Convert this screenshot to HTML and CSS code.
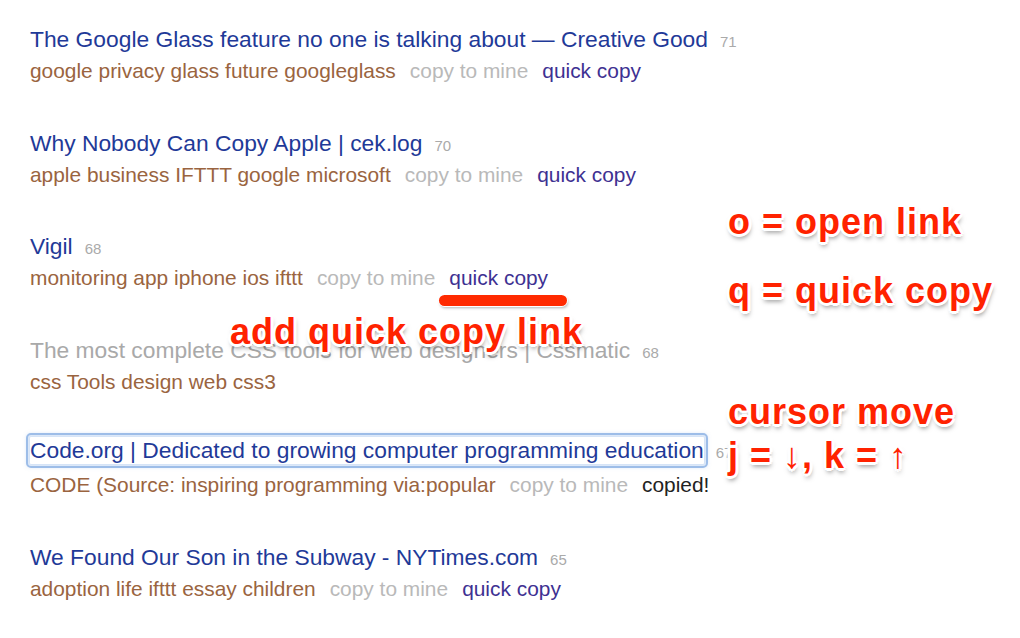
FILE: index.html
```html
<!DOCTYPE html>
<html>
<head>
<meta charset="utf-8">
<link rel="stylesheet" href="styles.css">
</head>
<body>
<div class="page">
  <ul class="list">
    <li class="entry">
      <div class="head"><a class="title">The Google Glass feature no one is talking about — Creative Good</a><span class="count">71</span></div>
      <div class="meta"><span class="tags">google privacy glass future googleglass</span><span class="copy">copy to mine</span><a class="quick">quick copy</a></div>
    </li>
    <li class="entry">
      <div class="head"><a class="title">Why Nobody Can Copy Apple | cek.log</a><span class="count">70</span></div>
      <div class="meta"><span class="tags">apple business IFTTT google microsoft</span><span class="copy">copy to mine</span><a class="quick">quick copy</a></div>
    </li>
    <li class="entry">
      <div class="head"><a class="title">Vigil</a><span class="count">68</span></div>
      <div class="meta"><span class="tags">monitoring app iphone ios ifttt</span><span class="copy">copy to mine</span><a class="quick">quick copy</a></div>
    </li>
    <li class="entry">
      <div class="head"><a class="title visited">The most complete CSS tools for web designers | Cssmatic</a><span class="count">68</span></div>
      <div class="meta"><span class="tags">css Tools design web css3</span></div>
    </li>
    <li class="entry">
      <div class="head"><a class="title focused">Code.org | Dedicated to growing computer programming education</a><span class="count">67</span></div>
      <div class="meta"><span class="tags">CODE (Source: inspiring programming via:popular</span><span class="copy">copy to mine</span><span class="copied">copied!</span></div>
    </li>
    <li class="entry">
      <div class="head"><a class="title">We Found Our Son in the Subway - NYTimes.com</a><span class="count">65</span></div>
      <div class="meta"><span class="tags">adoption life ifttt essay children</span><span class="copy">copy to mine</span><a class="quick">quick copy</a></div>
    </li>
  </ul>

  <div class="bar"></div>
  <div class="note note-add">add quick copy link</div>
  <div class="notes">
    <div class="note">o = open link</div>
    <div class="note n2">q = quick copy</div>
    <div class="note n3">cursor move</div>
    <div class="note n4">j = ↓, k = ↑</div>
  </div>
</div>
</body>
</html>
```
FILE: styles.css
```css
html, body {
  margin: 0;
  padding: 0;
  background: #fff;
}
body {
  font-family: "Liberation Sans", Arial, Helvetica, sans-serif;
}
.page {
  position: relative;
  width: 1020px;
  height: 638px;
  overflow: hidden;
}
.list {
  list-style: none;
  margin: 0;
  padding: 23px 0 0 30px;
  display: flex;
  flex-direction: column;
  gap: 39.6px;
}
.entry {
  display: flex;
  flex-direction: column;
}
.head {
  display: flex;
  align-items: baseline;
  gap: 12px;
  height: 32px;
  line-height: 32px;
}
.title {
  font-size: 22.8px;
  color: #1f3a98;
  text-decoration: none;
  white-space: nowrap;
}
.title.visited {
  color: #a9a9a9;
}
.title.focused {
  line-height: 27px;
  outline: 2px solid #9dbde8;
  outline-offset: 2px;
  box-shadow: 0 0 4px 3px rgba(120, 165, 225, 0.35);
  border-radius: 1px;
}
.count {
  font-size: 15px;
  color: #aaa;
}
.meta {
  display: flex;
  align-items: baseline;
  gap: 14px;
  height: 32px;
  line-height: 32px;
  font-size: 20.9px;
  white-space: nowrap;
}
.tags {
  color: #9a6440;
}
.copy {
  color: #b9b9b9;
}
.quick {
  color: #3e3192;
}
.copied {
  color: #222;
}

.bar {
  position: absolute;
  left: 439px;
  top: 295px;
  width: 128px;
  height: 11px;
  border-radius: 6px;
  background: #ff2a00;
  box-shadow: 0 0 0 1px #fff, 1px 2px 3px rgba(0, 0, 0, 0.3);
}
.note {
  font-size: 36px;
  line-height: 34px;
  font-weight: bold;
  letter-spacing: 1px;
  color: #ff2200;
  white-space: nowrap;
  text-shadow:
    3px 0 0 #fff, -3px 0 0 #fff, 0 3px 0 #fff, 0 -3px 0 #fff,
    2px 2px 0 #fff, -2px 2px 0 #fff, 2px -2px 0 #fff, -2px -2px 0 #fff,
    1px 4px 5px rgba(0, 0, 0, 0.5);
}
.note-add {
  position: absolute;
  left: 230px;
  top: 315px;
}
.notes {
  position: absolute;
  left: 728px;
  top: 205px;
}
.n2 { margin-top: 35px; }
.n3 { margin-top: 87px; }
.n4 { margin-top: 10px; }
```
